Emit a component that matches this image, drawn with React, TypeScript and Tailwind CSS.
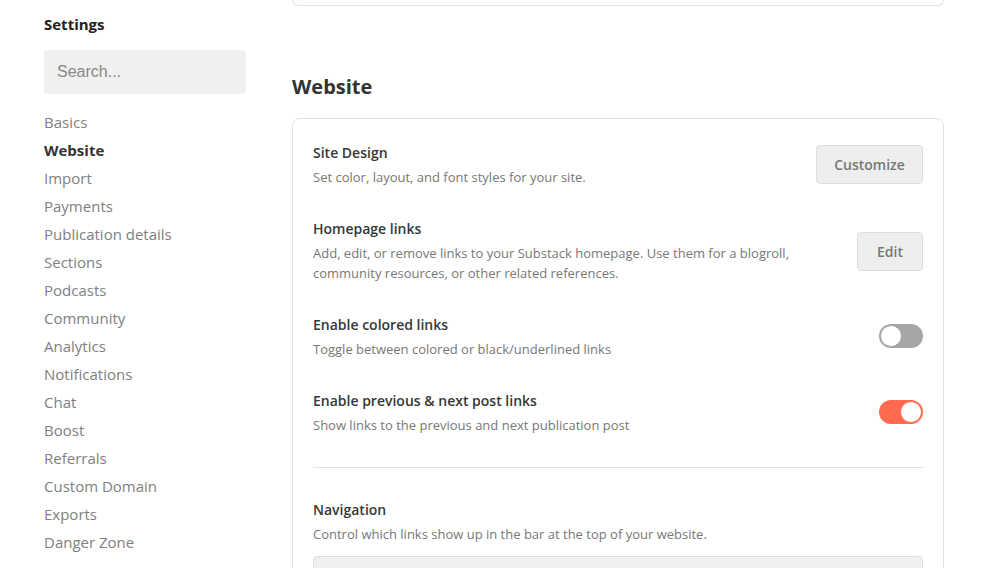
import type { ReactNode } from 'react';

const navItems = [
  'Basics',
  'Website',
  'Import',
  'Payments',
  'Publication details',
  'Sections',
  'Podcasts',
  'Community',
  'Analytics',
  'Notifications',
  'Chat',
  'Boost',
  'Referrals',
  'Custom Domain',
  'Exports',
  'Danger Zone',
];

function Toggle({ on }: { on: boolean }) {
  return (
    <div
      className={
        on
          ? 'w-[44px] h-[24px] rounded-full bg-[#ff6b4f] flex items-center justify-end p-[1px]'
          : 'w-[44px] h-[24px] rounded-full bg-[#a6a6a6] flex items-center justify-start p-[1px]'
      }
    >
      <div
        className={
          on
            ? 'w-[22px] h-[22px] rounded-full bg-white border border-[#ff6b4f]'
            : 'w-[22px] h-[22px] rounded-full bg-white border border-[#a6a6a6]'
        }
      />
    </div>
  );
}

function Row({ title, desc, children }: { title: string; desc: ReactNode; children?: ReactNode }) {
  return (
    <div className="flex items-center justify-between gap-8">
      <div className="flex flex-col gap-1 max-w-[500px]">
        <div className="text-[14px] leading-5 font-semibold text-[#363737]">{title}</div>
        <div className="text-[13px] leading-5 text-[#777]">{desc}</div>
      </div>
      {children}
    </div>
  );
}

export default function App() {
  return (
    <div className="min-h-screen bg-white flex font-['Open_Sans',sans-serif] overflow-hidden h-[568px]">
      <aside className="w-[292px] shrink-0 pl-[44px] pr-[46px] pt-[14px]">
        <h2 className="text-[15px] leading-5 font-bold text-[#222]">Settings</h2>
        <div className="mt-[16px] h-[44px] rounded-[4px] bg-[#f0f0f0] flex items-center px-[13px]">
          <span className="font-['Liberation_Sans',sans-serif] text-[16px] text-[#888]">Search...</span>
        </div>
        <nav className="mt-[14px] flex flex-col">
          {navItems.map((item) => (
            <div
              key={item}
              className={
                item === 'Website'
                  ? 'h-[28px] flex items-center text-[15px] font-bold text-[#333]'
                  : 'h-[28px] flex items-center text-[15px] text-[#808080]'
              }
            >
              {item}
            </div>
          ))}
        </nav>
      </aside>

      <main className="w-[652px] shrink-0">
        <div className="h-[6px] border border-t-0 border-[#e2e2e2] rounded-b-[8px]" />
        <h1 className="mt-[67px] text-[20px] leading-7 font-bold text-[#333]">Website</h1>
        <section className="mt-[17px] border border-[#e2e2e2] rounded-[8px] px-[20px] pt-[24px] pb-6 flex flex-col gap-8">
          <Row title="Site Design" desc="Set color, layout, and font styles for your site.">
            <button className="w-[107px] h-[39px] -mt-[2px] rounded-[4px] bg-[#eeeeee] border border-[#dddddd] text-[14px] font-semibold text-[#777]">
              Customize
            </button>
          </Row>
          <Row
            title="Homepage links"
            desc="Add, edit, or remove links to your Substack homepage. Use them for a blogroll, community resources, or other related references."
          >
            <button className="w-[66px] h-[39px] rounded-[4px] bg-[#eeeeee] border border-[#dddddd] text-[14px] font-semibold text-[#777]">
              Edit
            </button>
          </Row>
          <Row title="Enable colored links" desc="Toggle between colored or black/underlined links">
            <div className="-mt-[3px]">
              <Toggle on={false} />
            </div>
          </Row>
          <Row title="Enable previous & next post links" desc="Show links to the previous and next publication post">
            <div className="-mt-[3px]">
              <Toggle on={true} />
            </div>
          </Row>
          <div className="border-t border-[#e2e2e2]" />
          <div className="flex flex-col gap-1">
            <div className="text-[14px] leading-5 font-semibold text-[#363737]">Navigation</div>
            <div className="text-[13px] leading-5 text-[#777]">Control which links show up in the bar at the top of your website.</div>
            <div className="mt-[8px] h-[60px] rounded-[4px] bg-[#f0f0f0] border border-[#dddddd]" />
          </div>
        </section>
      </main>
    </div>
  );
}
